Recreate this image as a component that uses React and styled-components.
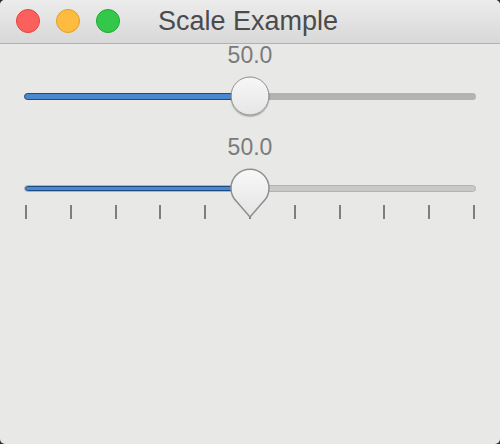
import React from 'react'
import styled, { createGlobalStyle } from 'styled-components'

const Global = createGlobalStyle`
  html, body {
    margin : 0;
    padding : 0;
    background : #2b2b2b;
  }
  body {
    font-family : "Liberation Sans", Arial, sans-serif;
  }
`
const Window = styled.div`
  width : 500px;
  height : 444px;
  background : #e8e8e6;
  border-radius : 5px;
  overflow : hidden;
  display : flex;
  flex-direction : column;
`
const TitleBar = styled.div`
  height : 43px;
  flex-shrink : 0;
  position : relative;
  display : flex;
  align-items : center;
  justify-content : center;
  background : linear-gradient(#ececec, #d8d8d8);
  border-bottom : 1px solid #b1b1b1;
`
const Lights = styled.div`
  position : absolute;
  left : 16px;
  top : 9px;
  display : flex;
  gap : 16px;
`
const Light = styled.span`
  width : 22px;
  height : 22px;
  border-radius : 50%;
  background : ${p => p.fill};
  border : 1px solid ${p => p.edge};
`
const Title = styled.div`
  font-size : 27px;
  color : #4b4b4b;
  margin-left : -4px;
`
const Content = styled.div`
  padding : 0 24px;
  display : flex;
  flex-direction : column;
`
const SliderBlock = styled.div`
  display : flex;
  flex-direction : column;
  margin-top : ${p => p.top}px;
`
const Label = styled.div`
  height : 22px;
  line-height : 22px;
  text-align : center;
  font-size : 23px;
  color : #7b7b7b;
`
const TrackArea = styled.div`
  position : relative;
  height : 40px;
  margin-top : 10px;
  display : flex;
  align-items : center;
`
const Track = styled.div`
  position : relative;
  width : 100%;
  height : 7px;
  box-sizing : border-box;
  border-radius : 4px;
  background : ${p => p.light ? '#c9c9c8' : '#b3b3b1'};
  border : ${p => p.light ? '1px solid #b2b2b1' : 'none'};
  overflow : hidden;
`
const Fill = styled.div`
  position : absolute;
  left : 0;
  top : 0;
  bottom : 0;
  box-sizing : border-box;
  background : #4a87cf;
  border : 1.5px solid #1d4c85;
  border-radius : 4px 0 0 4px;
`
const RoundThumb = styled.div`
  position : absolute;
  top : 50%;
  width : 39px;
  height : 39px;
  box-sizing : border-box;
  transform : translate(-50%, -50%);
  border-radius : 50%;
  border : 1.5px solid #8d8d8d;
  background : linear-gradient(#f7f7f7, #e6e6e6);
  box-shadow : 0 1.5px 1px rgba(0,0,0,0.25);
`
const PointerThumb = styled.svg`
  position : absolute;
  top : 0;
  transform : translateX(-50%);
  overflow : visible;
`
const Ticks = styled.div`
  display : flex;
  justify-content : space-between;
  padding : 0 1px;
  margin-top : -3px;
`
const Tick = styled.span`
  width : 2px;
  height : 14px;
  background : #7e7e7e;
`

const Slider = ({ value, pointer, top }) => (
  <SliderBlock top={top}>
    <Label>{value.toFixed(1)}</Label>
    <TrackArea>
      <Track light={pointer}>
        <Fill style={{ width: `${value}%` }} />
      </Track>
      {pointer ? (
        <PointerThumb style={{ left: `${value}%` }} width="40" height="50" viewBox="0 0 40 50">
          <defs>
            <linearGradient id="pg" x1="0" y1="0" x2="0" y2="1">
              <stop offset="0" stopColor="#f8f8f8" />
              <stop offset="1" stopColor="#e4e4e4" />
            </linearGradient>
          </defs>
          <path d="M20 49 L6.6 33.6 A19 19 0 1 1 33.4 33.6 Z" fill="url(#pg)" stroke="#8f8f8f" strokeWidth="1.5" strokeLinejoin="round" />
        </PointerThumb>
      ) : (
        <RoundThumb style={{ left: `${value}%` }} />
      )}
    </TrackArea>
    {pointer && (
      <Ticks>
        {Array.from({ length: 11 }).map((_, i) => <Tick key={i} />)}
      </Ticks>
    )}
  </SliderBlock>
)

export default function App() {
  return (
    <Window>
      <Global />
      <TitleBar>
        <Lights>
          <Light fill="#fc605c" edge="#e0443e" />
          <Light fill="#fdbc40" edge="#dea123" />
          <Light fill="#34c84a" edge="#1aab29" />
        </Lights>
        <Title>Scale Example</Title>
      </TitleBar>
      <Content>
        <Slider value={50} top={0} />
        <Slider value={50} pointer top={20} />
      </Content>
    </Window>
  )
}
